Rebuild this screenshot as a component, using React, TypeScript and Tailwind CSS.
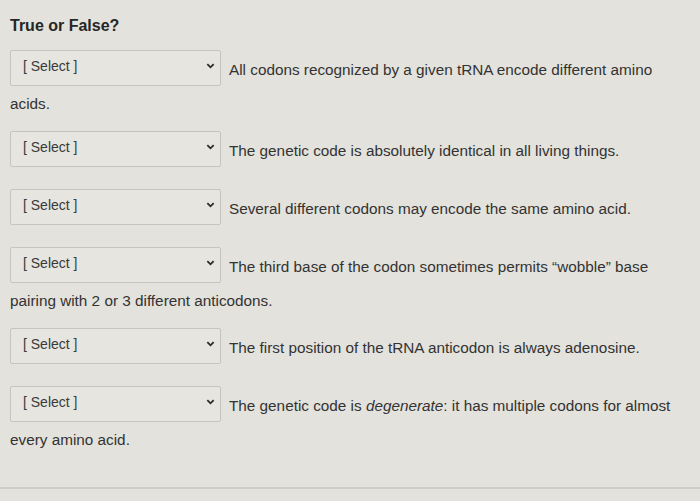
import React from "react";

const questions: React.ReactNode[] = [
  "All codons recognized by a given tRNA encode different amino acids.",
  "The genetic code is absolutely identical in all living things.",
  "Several different codons may encode the same amino acid.",
  <>The third base of the codon sometimes permits “wobble” base pairing with 2 or 3 different anticodons.</>,
  "The first position of the tRNA anticodon is always adenosine.",
  <>
    The genetic code is <em>degenerate</em>: it has multiple codons for almost every amino acid.
  </>,
];

function Chevron() {
  return (
    <svg
      className="pointer-events-none absolute right-[6px] top-[12px] h-[8px] w-[9px]"
      viewBox="0 0 10 8"
      fill="none"
      stroke="#2a2a2a"
      strokeWidth="2"
    >
      <path d="M1.5 2 L5 5.5 L8.5 2" />
    </svg>
  );
}

function SelectBox() {
  return (
    <span className="relative mb-[6px] mr-[8px] inline-block align-middle">
      <select className="block h-[36px] w-[211px] appearance-none rounded-[2px] border border-[#c5c4bf] bg-[#e6e5e0] pb-[3px] pl-[12px] text-[14px] text-[#3a3a3a] outline-none">
        <option>[ Select ]</option>
        <option>True</option>
        <option>False</option>
      </select>
      <Chevron />
    </span>
  );
}

export default function App() {
  return (
    <div
      className="h-[501px] w-[700px] overflow-hidden bg-[#e3e2dc] text-[#333]"
      style={{ fontFamily: '"Liberation Sans", Arial, sans-serif' }}
    >
      <div className="h-[489px] border-b-2 border-[#cfcec8] pl-[10px] pr-[5px] pt-[15px]">
        <h2 className="mb-[13px] text-[16px] font-bold leading-[22px] text-[#262626]">
          True or False?
        </h2>
        {questions.map((q, i) => (
          <p key={i} className="mb-[16px] text-[15.3px] leading-[23px]">
            <SelectBox />
            {q}
          </p>
        ))}
      </div>
    </div>
  );
}
